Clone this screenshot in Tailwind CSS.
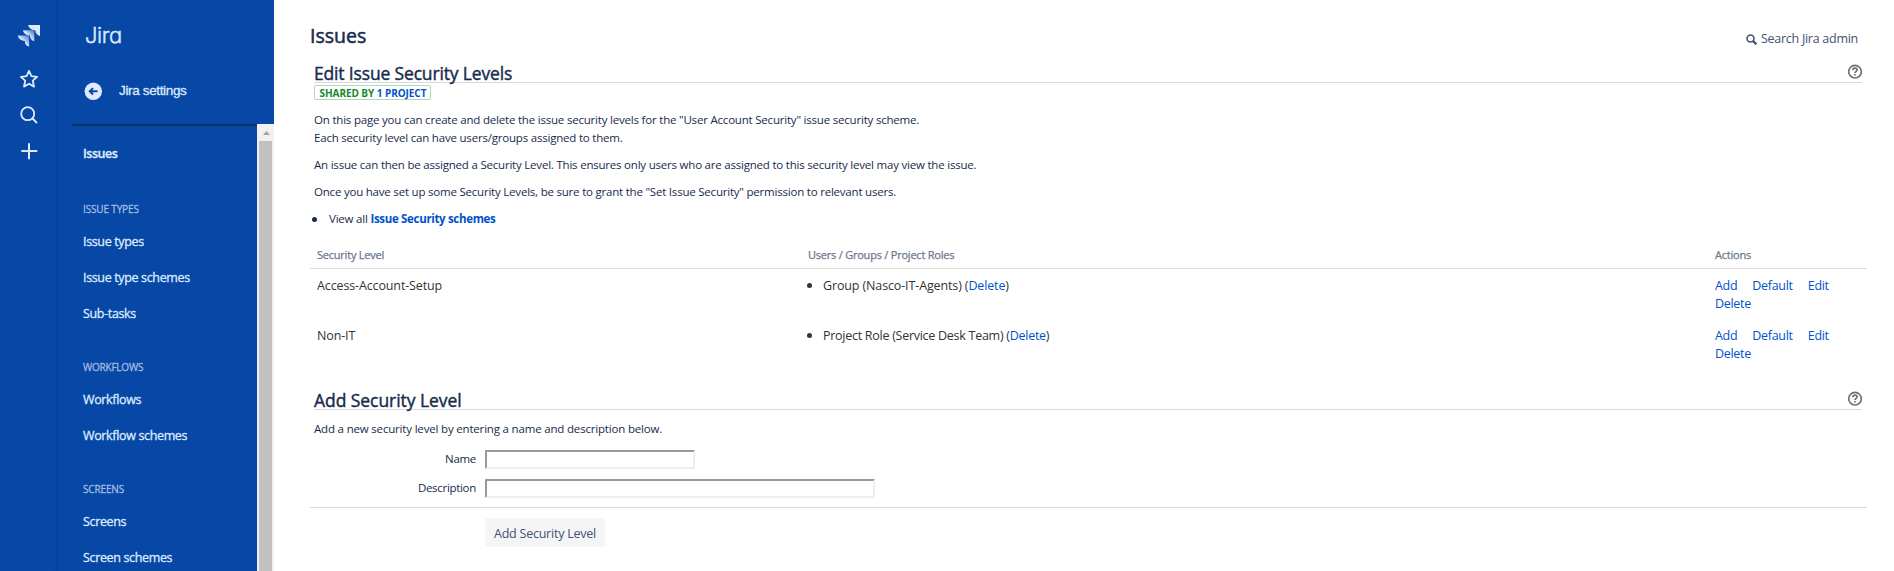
<!DOCTYPE html>
<html lang="en">
<head>
  <meta charset="UTF-8" />
  <meta name="viewport" content="width=device-width, initial-scale=1.0"/>
  <title>Issues - Jira</title>
  <script src="https://cdn.jsdelivr.net/npm/@tailwindcss/browser@4"></script>
</head>
<body class="flex h-screen overflow-hidden bg-white font-['Open_Sans',sans-serif] text-[11.5px] leading-[18px] tracking-[-0.2px] text-[#172b4d]">

  <!-- Global rail -->
  <nav class="flex w-[58px] shrink-0 flex-col items-center bg-linear-to-r from-[#0747a6] from-92% to-[#07429b] text-[#deebff]">
    <svg class="mt-[24px] h-[23px] w-[24px]" viewBox="0 0 24 23">
      <defs>
        <linearGradient id="fade" x1="1" y1="0" x2="0.3" y2="0.7">
          <stop offset="0.15" stop-color="#deebff" stop-opacity="0.4"/>
          <stop offset="0.75" stop-color="#deebff"/>
        </linearGradient>
      </defs>
      <path d="M11 1h12v11c-2.6-.8-4.5-2.3-4.7-5.7C14.8 6.1 12 4.5 11 1z" fill="#deebff"/>
      <path d="M5.8 6.3h11.5v11c-2.6-.8-4.2-2.3-4.4-5.7C9.5 11.4 6.8 9.8 5.8 6.3z" fill="url(#fade)"/>
      <path d="M.6 11.6h11.5v11c-2.6-.8-4.2-2.3-4.4-5.7C4.3 16.7 1.6 15.1.6 11.6z" fill="url(#fade)"/>
    </svg>
    <svg class="mt-[22px] h-[20px] w-[20px]" viewBox="0 0 20 20" fill="none" stroke="currentColor" stroke-width="1.8" stroke-linejoin="round">
      <path d="M10 1.9l2.400 5.300 5.700.6-4.300 3.900 1.200 5.900-5-2.900-5 2.900 1.200-5.900L1.900 7.800l5.700-.6z"/>
    </svg>
    <svg class="mt-[16px] h-[20px] w-[20px]" viewBox="0 0 20 20" fill="none" stroke="currentColor" stroke-width="1.8" stroke-linecap="round">
      <circle cx="8.7" cy="8.7" r="6.5"/>
      <path d="M13.5 13.5l4 4"/>
    </svg>
    <svg class="mt-[16px] h-[20px] w-[20px]" viewBox="0 0 20 20" fill="none" stroke="currentColor" stroke-width="2" stroke-linecap="round">
      <path d="M10 3v14.500M3 10h14.500"/>
    </svg>
  </nav>

  <!-- Settings navigation -->
  <aside class="flex w-[216px] shrink-0 flex-col bg-[#0747a6] text-[#deebff]">
    <div class="h-[124px] shrink-0 pl-[26px]">
      <div class="pt-[21px] pl-[1px] text-[22px] leading-[28px] tracking-[-0.4px] font-light font-['Inter',sans-serif] [font-feature-settings:'cv11'] [-webkit-text-stroke:0.4px_currentColor]">Jira</div>
      <div class="mt-[33px] flex items-center">
        <svg class="h-[18px] w-[18px]" viewBox="0 0 18 18">
          <circle cx="9.3" cy="9.3" r="8.7" fill="#deebff"/>
          <path d="M13.5 9.3H6M9 6.1L5.8 9.3 9 12.5" fill="none" stroke="#0747a6" stroke-width="2"/>
        </svg>
        <span class="ml-[17px] text-[13.5px] tracking-[-0.35px] font-['Liberation_Sans',sans-serif] [-webkit-text-stroke:0.3px_currentColor]">Jira settings</span>
      </div>
    </div>
    <div class="flex min-h-0 flex-1">
      <div class="flex-1 text-[12.5px] tracking-[-0.35px]">
        <div class="ml-[14px] h-[2px] bg-[#09326c]"></div>
        <ul class="pl-[25px] [-webkit-text-stroke:0.3px_currentColor]">
          <li class="mt-[19px] font-semibold tracking-[-0.5px]">Issues</li>
          <li class="mt-[37px] text-[10px] tracking-[-0.15px] text-[#a3bbe2]">ISSUE TYPES</li>
          <li class="mt-[15px]">Issue types</li>
          <li class="mt-[18px]">Issue type schemes</li>
          <li class="mt-[18px]">Sub-tasks</li>
          <li class="mt-[35px] text-[10px] tracking-[-0.22px] text-[#a3bbe2]">WORKFLOWS</li>
          <li class="mt-[15px]">Workflows</li>
          <li class="mt-[18px]">Workflow schemes</li>
          <li class="mt-[35px] text-[10px] tracking-[-0.15px] text-[#a3bbe2]">SCREENS</li>
          <li class="mt-[15px]">Screens</li>
          <li class="mt-[18px]">Screen schemes</li>
        </ul>
      </div>
      <!-- Scrollbar -->
      <div class="flex w-[17px] flex-col border-l-2 border-[#f1f1f1] bg-[#f1f1f1]">
        <div class="flex h-[17px] shrink-0 items-center justify-center">
          <svg class="h-[4px] w-[7px]" viewBox="0 0 7 4"><path d="M3.5 0L7 4H0z" fill="#a3a3a3"/></svg>
        </div>
        <div class="mr-[2px] flex-1 bg-[#c1c1c1]"></div>
      </div>
    </div>
  </aside>

  <!-- Content -->
  <main class="min-w-0 flex-1 pt-[24px] pr-[27px] pl-[36px]">
    <header class="flex h-[37px] justify-between">
      <h1 class="text-[19.5px] leading-[24px] tracking-normal [-webkit-text-stroke:0.5px_currentColor]">Issues</h1>
      <a class="mt-[6px] mr-[9px] flex text-[12.5px] tracking-[-0.27px] text-[#42526e]">
        <svg class="mt-[4px] mr-[4px] h-[11px] w-[11px]" viewBox="0 0 11 11" fill="none" stroke="#42526e">
          <circle cx="4.5" cy="4.5" r="3.5" stroke-width="1.6"/>
          <path d="M7 7l3.300 3.300" stroke-width="2.3"/>
        </svg>
        Search Jira admin
      </a>
    </header>

    <section class="pr-[5px] pl-[4px]">
      <div class="flex h-[22px] justify-between border-b border-[#d9d9d9]">
        <h2 class="text-[17.5px] leading-[24px] tracking-[-0.16px] [-webkit-text-stroke:0.4px_currentColor]">Edit Issue Security Levels</h2>
        <svg class="mt-[3px] h-[15px] w-[15px]" viewBox="0 0 15 15" fill="none" stroke="#707070">
          <circle cx="8" cy="7.7" r="6.3" stroke-width="1.7"/>
          <path d="M5.9 6.2c0-1.300.9-2 2.100-2s2.100.7 2.100 1.800c0 1.300-2.100 1.500-2.100 3.100M8 10v1.500" stroke-width="1.7"/>
        </svg>
      </div>
      <div class="mt-[2px] flex h-[15px] w-[117px] items-center rounded-[2px] border border-[#b2d8b9] pt-[1px] pl-[4.5px] text-[10px] leading-[14px] font-bold tracking-[-0.06px] whitespace-pre text-[#14892c]">SHARED BY <a class="text-[#0052cc]">1 PROJECT</a></div>

      <p class="mt-[11px]">On this page you can create and delete the issue security levels for the "User Account Security" issue security scheme.<br>Each security level can have users/groups assigned to them.</p>
      <p class="mt-[9px] tracking-[-0.21px]">An issue can then be assigned a Security Level. This ensures only users who are assigned to this security level may view the issue.</p>
      <p class="mt-[9px] tracking-[-0.21px]">Once you have set up some Security Levels, be sure to grant the "Set Issue Security" permission to relevant users.</p>
      <ul class="mt-[9px]">
        <li class="flex items-center">
          <span class="mr-[12px] ml-[-2px] h-[5px] w-[5px] rounded-full bg-[#172b4d]"></span>
          <span>View all <a class="font-bold tracking-[-0.33px] text-[#0052cc]">Issue Security schemes</a></span>
        </li>
      </ul>
    </section>

    <!-- Security levels -->
    <table class="mt-[12px] w-full table-fixed border-collapse text-left text-[12.5px] text-[#333333]">
      <colgroup><col class="w-[491px]"><col class="w-[907px]"><col></colgroup>
      <thead>
        <tr class="h-[28px] border-b border-[#dddddd] text-[11px] tracking-[-0.22px] text-[#6b778c] [-webkit-text-stroke:0.25px_currentColor]">
          <th class="pt-[6px] pb-[3px] pl-[7px] font-normal">Security Level</th>
          <th class="pt-[6px] pb-[3px] pl-[7px] font-normal">Users / Groups / Project Roles</th>
          <th class="pt-[6px] pb-[3px] pl-[7px] font-normal">Actions</th>
        </tr>
      </thead>
      <tbody class="align-top">
        <tr class="h-[50px]">
          <td class="pt-[8px] pb-[6px] pl-[7px] tracking-[-0.13px]">Access-Account-Setup</td>
          <td class="pt-[8px] pb-[6px] pl-[6px]">
            <div class="flex items-center tracking-[-0.13px]">
              <span class="mr-[11px] h-[5px] w-[5px] rounded-full bg-[#333333]"></span>
              <span>Group (Nasco-IT-Agents) (<a class="text-[#0052cc]">Delete</a>)</span>
            </div>
          </td>
          <td class="pt-[8px] pb-[6px] pl-[7px] text-[#0052cc]">
            <div class="flex flex-wrap gap-x-[15px] tracking-[-0.3px]"><a>Add</a><a>Default</a><a>Edit</a><a>Delete</a></div>
          </td>
        </tr>
        <tr class="h-[50px]">
          <td class="pt-[8px] pb-[6px] pl-[7px] tracking-[-0.13px]">Non-IT</td>
          <td class="pt-[8px] pb-[6px] pl-[6px]">
            <div class="flex items-center tracking-[-0.27px]">
              <span class="mr-[11px] h-[5px] w-[5px] rounded-full bg-[#333333]"></span>
              <span>Project Role (Service Desk Team) (<a class="text-[#0052cc]">Delete</a>)</span>
            </div>
          </td>
          <td class="pt-[8px] pb-[6px] pl-[7px] text-[#0052cc]">
            <div class="flex flex-wrap gap-x-[15px] tracking-[-0.3px]"><a>Add</a><a>Default</a><a>Edit</a><a>Delete</a></div>
          </td>
        </tr>
      </tbody>
    </table>

    <!-- Add form -->
    <form>
      <div class="mt-[19px] pr-[5px] pl-[4px]">
        <div class="flex h-[22px] justify-between border-b border-[#d9d9d9]">
          <h2 class="text-[17.5px] leading-[24px] tracking-[-0.06px] [-webkit-text-stroke:0.4px_currentColor]">Add Security Level</h2>
          <svg class="mt-[3px] h-[15px] w-[15px]" viewBox="0 0 15 15" fill="none" stroke="#707070">
            <circle cx="8" cy="7.7" r="6.3" stroke-width="1.7"/>
            <path d="M5.9 6.2c0-1.300.9-2 2.100-2s2.100.7 2.100 1.800c0 1.300-2.100 1.500-2.100 3.100M8 10v1.500" stroke-width="1.7"/>
          </svg>
        </div>
        <p class="mt-[10px] tracking-[-0.18px]">Add a new security level by entering a name and description below.</p>
      </div>
      <div class="mt-[12px] flex h-[19px] tracking-[-0.3px]">
        <label class="w-[166px] text-right">Name</label>
        <input type="text" class="ml-[9px] h-[19px] w-[210px] rounded-[1px] border-2 border-t-[#9a9a9a] border-r-[#eeeeee] border-b-[#eeeeee] border-l-[#9a9a9a]">
      </div>
      <div class="mt-[10px] flex h-[19px] tracking-[-0.3px]">
        <label class="w-[166px] text-right">Description</label>
        <input type="text" class="ml-[9px] h-[19px] w-[390px] rounded-[1px] border-2 border-t-[#9a9a9a] border-r-[#eeeeee] border-b-[#eeeeee] border-l-[#9a9a9a]">
      </div>
      <div class="mt-[9px] border-t border-[#d9d9d9] pt-[10px] pl-[175px]">
        <button type="button" class="h-[29px] w-[120px] rounded-[3px] bg-[#f4f5f7] pt-[3px] text-[12.5px] tracking-[-0.23px] text-[#42526e]">Add Security Level</button>
      </div>
    </form>
  </main>
</body>
</html>
